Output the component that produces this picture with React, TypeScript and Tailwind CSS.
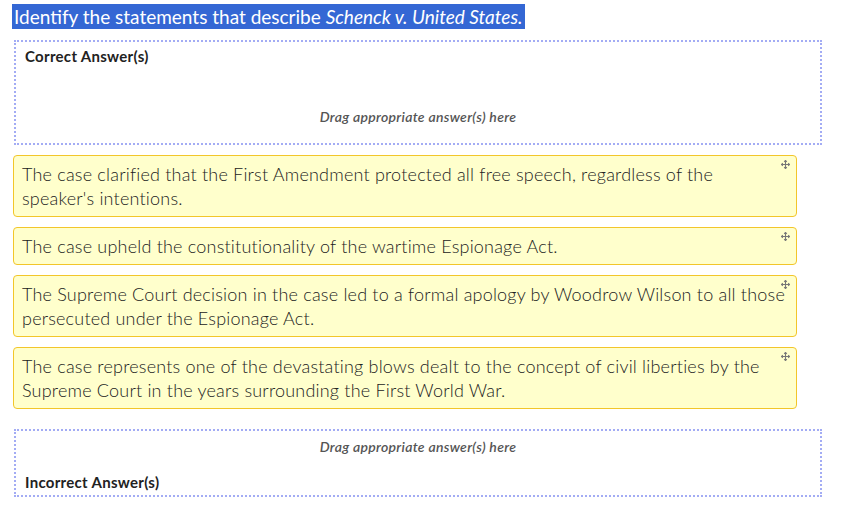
import React from 'react'

const answers = [
  "The case clarified that the First Amendment protected all free speech, regardless of the speaker's intentions.",
  'The case upheld the constitutionality of the wartime Espionage Act.',
  'The Supreme Court decision in the case led to a formal apology by Woodrow Wilson to all those persecuted under the Espionage Act.',
  'The case represents one of the devastating blows dealt to the concept of civil liberties by the Supreme Court in the years surrounding the First World War.',
]

function MoveIcon() {
  return (
    <svg className="absolute right-[6px] top-[4px] w-[9px] h-[9px] text-[#777]" viewBox="0 0 10 10" fill="none" stroke="currentColor" strokeWidth={1.2}>
      <path d="M5 0.5v9M0.5 5h9" />
      <path d="M3.5 2L5 0.5 6.5 2M3.5 8L5 9.5 6.5 8M2 3.5L0.5 5 2 6.5M8 3.5L9.5 5 8 6.5" />
    </svg>
  )
}

function DropZone({ label, top }: { label: string; top: boolean }) {
  const hint = 'text-center text-[14px] leading-[18px] tracking-[0.3px] italic font-semibold text-[#555]'
  const title = 'text-[15px] leading-[20px] tracking-[0.3px] font-bold text-[#222]'
  return (
    <div className="ml-[14px] w-[808px] border-2 border-dotted border-[#a3acf4] px-[9px]">
      {top ? (
        <div className="h-[101px] flex flex-col">
          <div className={`pt-[4px] ${title}`}>{label}</div>
          <div className={`mt-[42px] ${hint}`}>Drag appropriate answer(s) here</div>
        </div>
      ) : (
        <div className="h-[64px] flex flex-col">
          <div className={`pt-[7px] ${hint}`}>Drag appropriate answer(s) here</div>
          <div className={`mt-[16px] ${title}`}>{label}</div>
        </div>
      )}
    </div>
  )
}

export default function App() {
  return (
    <div className="w-[842px] h-[515px] bg-white pt-[4px] font-['Lato','Liberation_Sans',sans-serif]">
      <div className="pl-[12px]">
        <span className="inline-block bg-[#3467d4] text-white text-[19px] leading-[25px] px-[2px]">
          Identify the statements that describe <i>Schenck v. United States.</i>
        </span>
      </div>
      <div className="mt-[10px]">
        <DropZone label="Correct Answer(s)" top />
      </div>
      <div className="ml-[13px] w-[784px] mt-[10px] flex flex-col gap-[10px]">
        {answers.map((a) => (
          <div key={a} className="relative bg-[#ffffcc] border border-[#f2c62a] rounded-[4px] pl-[8px] pr-[9px] py-[6px]">
            <p className="text-[18px] leading-[24px] tracking-[0.2px] text-[#222] font-light">{a}</p>
            <MoveIcon />
          </div>
        ))}
      </div>
      <div className="mt-[20px]">
        <DropZone label="Incorrect Answer(s)" top={false} />
      </div>
    </div>
  )
}
